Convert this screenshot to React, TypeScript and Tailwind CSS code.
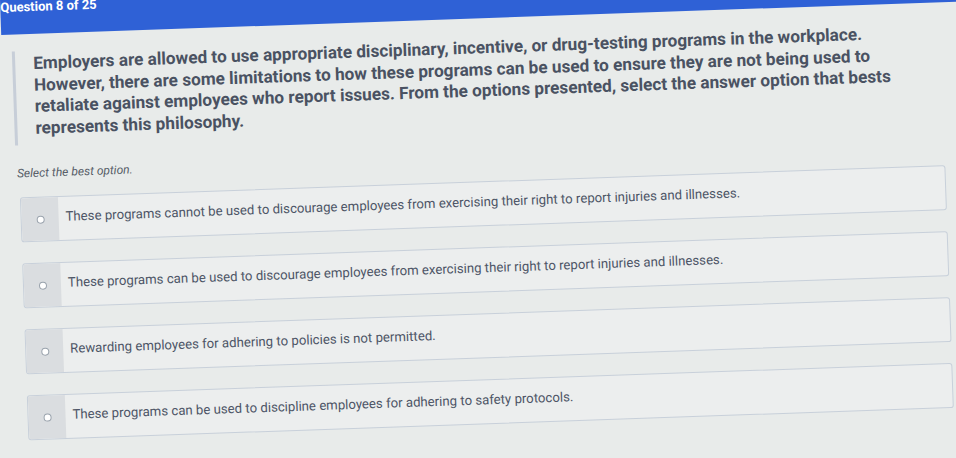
const options = [
  'These programs cannot be used to discourage employees from exercising their right to report injuries and illnesses.',
  'These programs can be used to discourage employees from exercising their right to report injuries and illnesses.',
  'Rewarding employees for adhering to policies is not permitted.',
  'These programs can be used to discipline employees for adhering to safety protocols.',
];

function Option({ label }: { label: string }) {
  return (
    <label className="flex h-[45px] w-[926px] cursor-pointer overflow-hidden rounded-[3px] border border-[#c8d0da] bg-[#eceeee]">
      <span className="flex w-[37px] shrink-0 items-center justify-center bg-[#dadde0]">
        <span className="h-[8px] w-[8px] rounded-full border border-[#9aa3ad] bg-white" />
      </span>
      <span className="flex items-center pb-[3px] pl-[7px] text-[13.2px] text-[#4d5566]">{label}</span>
    </label>
  );
}

export default function App() {
  return (
    <div className="h-[458px] w-[956px] overflow-hidden bg-[#e8ebea] font-['Roboto',sans-serif]">
      <div className="w-[1010px] origin-top-left rotate-[-2deg]">
        <div className="h-[35px] bg-[#2f61d6] pt-[1px] text-[13px] font-bold leading-[13px] text-white">
          Question 8 of 25
        </div>

        <div className="mt-[17px] flex pl-[10px]">
          <div className="w-[3px] shrink-0 bg-[#c7ced8]" />
          <p className="pb-[6px] pt-[2px] pl-[18px] text-[17.2px] font-bold leading-[21.5px] text-[#4a5262]">
            Employers are allowed to use appropriate disciplinary, incentive, or drug-testing programs in the workplace.
            <br />
            However, there are some limitations to how these programs can be used to ensure they are not being used to
            <br />
            retaliate against employees who report issues. From the options presented, select the answer option that bests
            <br />
            represents this philosophy.
          </p>
        </div>

        <div className="mt-[19px] pl-[11px] text-[12px] italic text-[#555b66]">Select the best option.</div>

        <div className="mt-[15px] flex flex-col gap-[21px] pl-[13px]">
          {options.map(o => (
            <Option key={o} label={o} />
          ))}
        </div>
      </div>
    </div>
  );
}
